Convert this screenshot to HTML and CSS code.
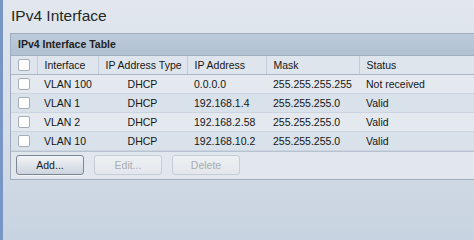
FILE: index.html
```html
<!DOCTYPE html>
<html>
<head>
<meta charset="utf-8">
<title>IPv4 Interface</title>
<link rel="stylesheet" href="styles.css">
</head>
<body>
<div class="page">
  <h1 class="title">IPv4 Interface</h1>
  <div class="panel">
    <div class="panel-head">IPv4 Interface Table</div>
    <table class="grid">
      <colgroup>
        <col class="c-chk"><col class="c-if"><col class="c-type"><col class="c-ip"><col class="c-mask"><col class="c-status">
      </colgroup>
      <thead>
        <tr>
          <th class="chk"><span class="box"></span></th>
          <th>Interface</th>
          <th>IP Address Type</th>
          <th>IP Address</th>
          <th>Mask</th>
          <th>Status</th>
        </tr>
      </thead>
      <tbody>
        <tr class="odd">
          <td class="chk"><span class="box"></span></td>
          <td>VLAN 100</td><td class="center">DHCP</td><td>0.0.0.0</td><td>255.255.255.255</td><td>Not received</td>
        </tr>
        <tr class="even">
          <td class="chk"><span class="box"></span></td>
          <td>VLAN 1</td><td class="center">DHCP</td><td>192.168.1.4</td><td>255.255.255.0</td><td>Valid</td>
        </tr>
        <tr class="odd">
          <td class="chk"><span class="box"></span></td>
          <td>VLAN 2</td><td class="center">DHCP</td><td>192.168.2.58</td><td>255.255.255.0</td><td>Valid</td>
        </tr>
        <tr class="even">
          <td class="chk"><span class="box"></span></td>
          <td>VLAN 10</td><td class="center">DHCP</td><td>192.168.10.2</td><td>255.255.255.0</td><td>Valid</td>
        </tr>
      </tbody>
    </table>
    <div class="actions">
      <button class="btn">Add...</button>
      <button class="btn" disabled>Edit...</button>
      <button class="btn" disabled>Delete</button>
    </div>
  </div>
</div>
</body>
</html>
```
FILE: styles.css
```css
html, body {
  margin: 0;
  padding: 0;
  height: 100%;
  overflow: hidden;
}
body {
  font-family: "Liberation Sans", Arial, sans-serif;
  color: #1a1a1a;
  background: linear-gradient(to bottom, #e2e7ee 0%, #d5dde7 55%, #c8d3e1 100%);
}
.page {
  height: 100%;
  border-left: 3px solid #7896c4;
  padding-left: 7px;
  box-sizing: border-box;
}
.title {
  margin: 0;
  padding: 6px 0 0 1px;
  font-size: 15.5px;
  line-height: 20px;
  font-weight: normal;
  color: #262626;
}
.panel {
  margin-top: 7px;
  width: 480px;
  border: 1px solid #9eaec0;
  border-right: none;
  background: #e2e7ed;
}
.panel-head {
  height: 21px;
  line-height: 21px;
  padding-left: 7px;
  font-size: 10.5px;
  font-weight: bold;
  color: #222;
  background: linear-gradient(to bottom, #bccada, #b1c1d2);
  border-bottom: 1px solid #9daec0;
}
.grid {
  border-collapse: collapse;
  table-layout: fixed;
  width: 463px;
  font-size: 10.5px;
}
.c-chk { width: 26px; }
.c-if { width: 61px; }
.c-type { width: 89px; }
.c-ip { width: 79px; }
.c-mask { width: 93px; }
.c-status { width: 115px; }
.grid th, .grid td {
  height: 18px;
  padding: 0 0 0 7px;
  text-align: left;
  white-space: nowrap;
  overflow: hidden;
  color: #161616;
}
.grid th {
  font-weight: normal;
  background: #dfe5ec;
  border-left: 1px solid #c1ccd8;
  border-bottom: 1px solid #a9b7c6;
}
.grid th.chk { border-left: none; }
.grid td {
  border-bottom: 1px solid #ccd5df;
}
.grid td.center { text-align: center; padding-left: 0; }
.grid .chk { padding: 0 0 0 7px; }
.odd td { background: #e4e9f0; }
.even td { background: #d9e1ea; }
.box {
  display: block;
  width: 10px;
  height: 10px;
  border: 1px solid #a6aeb8;
  border-radius: 2px;
  background: #fff;
}
.actions {
  display: flex;
  gap: 10px;
  padding: 3px 0 4px 5px;
  background: #e2e7ed;
  border-top: 1px solid #b6c2cf;
}
.btn {
  width: 68px;
  height: 20px;
  padding: 0;
  font-family: "Liberation Sans", Arial, sans-serif;
  font-size: 10.5px;
  color: #1a1a1a;
  border: 1px solid #7a8694;
  border-radius: 3px;
  background: linear-gradient(to bottom, #f3f5f7, #ccd4dd);
  box-shadow: 0 1px 0 rgba(255,255,255,0.5);
}
.btn:disabled {
  color: #a8acb1;
  border-color: #c6cdd5;
  background: linear-gradient(to bottom, #eef1f4, #e2e6eb);
  box-shadow: none;
}
```
